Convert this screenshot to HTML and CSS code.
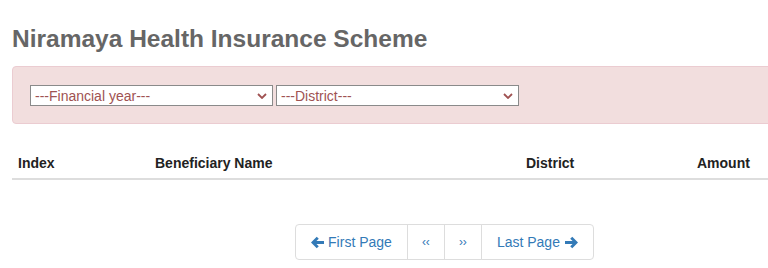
FILE: index.html
```html
<!DOCTYPE html>
<html lang="en">
<head>
    <meta charset="UTF-8">
    <meta name="viewport" content="width=device-width, initial-scale=1.0">
    <title>Niramaya Health Insurance Scheme</title>
    <link rel="stylesheet" href="styles.css">
</head>
<body>
    <div class="page">
        <h2 class="title">Niramaya Health Insurance Scheme</h2>

        <div class="filter-box">
            <select id="year" class="filter">
                <option>---Financial year---</option>
            </select>
            <select id="district" class="filter">
                <option>---District---</option>
            </select>
        </div>

        <table class="claims">
            <thead>
                <tr>
                    <th class="col-index">Index</th>
                    <th class="col-name">Beneficiary Name</th>
                    <th class="col-district">District</th>
                    <th class="col-amount">Amount</th>
                </tr>
            </thead>
            <tbody></tbody>
        </table>

        <div class="pager-wrap">
            <ul class="pager">
                <li><a href="#">
                    <svg class="arrow" width="13" height="13" viewBox="0 0 12 12"><path d="M0 6L5.3 0.7L7.2 2.6L5 4.7H12V7.3H5L7.2 9.4L5.3 11.3Z" fill="#337ab7"/></svg>First Page</a></li>
                <li><a href="#" class="small">&lsaquo;&lsaquo;</a></li>
                <li><a href="#" class="small">&rsaquo;&rsaquo;</a></li>
                <li><a href="#">Last Page
                    <svg class="arrow right" width="13" height="13" viewBox="0 0 12 12"><path d="M12 6L6.7 0.7L4.8 2.6L7 4.7H0V7.3H7L4.8 9.4L6.7 11.3Z" fill="#337ab7"/></svg></a></li>
            </ul>
        </div>
    </div>
</body>
</html>
```

FILE: styles.css
```css
body {
    margin: 0;
    font-family: "Liberation Sans", Arial, sans-serif;
    font-size: 14px;
    color: #333;
    overflow: hidden;
}
.page {
    width: 865px;
    padding: 0 12px;
}
.title {
    margin: 0 0 15px;
    padding-top: 27px;
    font-size: 24.5px;
    line-height: 24px;
    font-weight: bold;
    color: #666;
}
.filter-box {
    background: #f2dede;
    border: 1px solid #ebccd1;
    border-radius: 4px;
    height: 58px;
    box-sizing: border-box;
    padding: 18px 17px;
    display: flex;
    gap: 3px;
}
.filter {
    appearance: none;
    -webkit-appearance: none;
    width: 243px;
    height: 21px;
    padding: 0 20px 0 4px;
    border: 1px solid #8a8a8a;
    border-radius: 0;
    font-family: "Liberation Sans", Arial, sans-serif;
    font-size: 14px;
    color: #a05252;
    background: #fff url("data:image/svg+xml;utf8,<svg xmlns='http://www.w3.org/2000/svg' width='10' height='6'><path d='M1 1l4 4 4-4' fill='none' stroke='%23a05252' stroke-width='1.8'/></svg>") no-repeat right 5px center;
}
.claims {
    width: 100%;
    margin-top: 21px;
    border-collapse: collapse;
}
.claims th {
    text-align: left;
    font-weight: bold;
    color: #222;
    padding: 8px 6px 5px;
    line-height: 20px;
    border-bottom: 2px solid #ddd;
}
.col-index { width: 125px; }
.col-name { width: 359px; }
.col-district { width: 159px; }
.pager-wrap {
    text-align: center;
    margin-top: 44px;
}
.pager {
    display: inline-flex;
    list-style: none;
    margin: 0;
    padding: 0;
    border-radius: 4px;
}
.pager li a {
    display: flex;
    align-items: center;
    padding: 7px 15px;
    line-height: 20px;
    color: #337ab7;
    text-decoration: none;
    border: 1px solid #ddd;
    margin-left: -1px;
    background: #fff;
}
.pager li:first-child a {
    border-radius: 4px 0 0 4px;
    margin-left: 0;
}
.pager li:last-child a {
    border-radius: 0 4px 4px 0;
}
.pager li a.small {
    font-size: 12px;
    padding: 7px 14px;
}
.arrow {
    margin-right: 4px;
}
.arrow.right {
    margin-right: 0;
    margin-left: 5px;
}
```
